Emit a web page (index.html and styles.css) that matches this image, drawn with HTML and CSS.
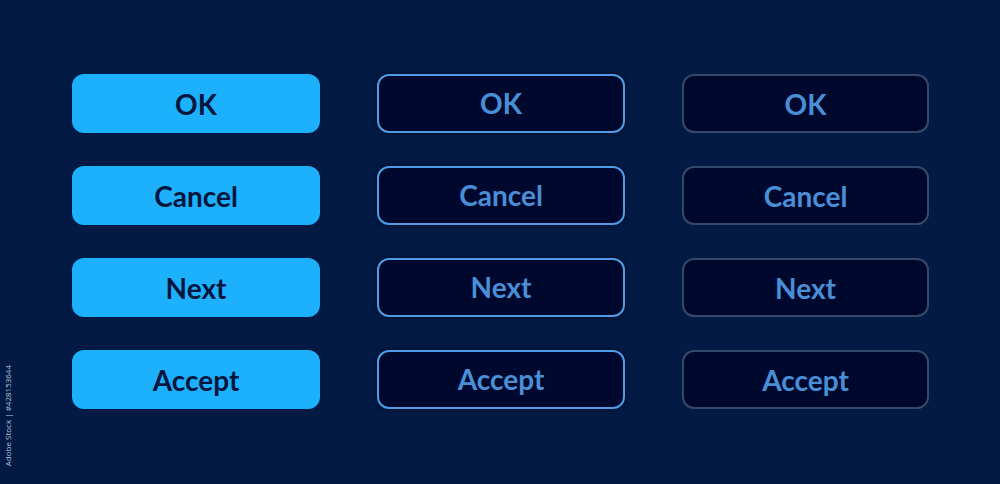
FILE: index.html
```html
<!DOCTYPE html>
<html lang="en">

<head>
  <meta charset="UTF-8">
  <meta name="viewport" content="width=device-width, initial-scale=1.0">
  <title>Buttons</title>
  <link rel="stylesheet" href="styles.css">
</head>

<body>
  <div class="board">
    <div class="column">
      <button class="btn btnFilled">OK</button>
      <button class="btn btnFilled">Cancel</button>
      <button class="btn btnFilled">Next</button>
      <button class="btn btnFilled">Accept</button>
    </div>
    <div class="column">
      <button class="btn btnOutline">OK</button>
      <button class="btn btnOutline">Cancel</button>
      <button class="btn btnOutline">Next</button>
      <button class="btn btnOutline">Accept</button>
    </div>
    <div class="column">
      <button class="btn btnMuted">OK</button>
      <button class="btn btnMuted">Cancel</button>
      <button class="btn btnMuted">Next</button>
      <button class="btn btnMuted">Accept</button>
    </div>
  </div>
  <div class="stockId">Adobe Stock | #428153644</div>
</body>

</html>
```

FILE: styles.css
```css
html,
body {
  margin: 0;
  width: 100%;
  height: 100%;
  background-color: #031a45;
  font-family: Lato, "Open Sans", sans-serif;
}

body {
  position: relative;
  overflow: hidden;
}

.board {
  display: grid;
  grid-template-columns: 248px 248px 247px;
  column-gap: 57px;
  padding: 74px 0 0 72px;
}

.column {
  display: flex;
  flex-direction: column;
  gap: 33px;
}

.btn {
  height: 59px;
  border-radius: 12px;
  font-family: inherit;
  font-size: 28px;
  font-weight: 700;
  cursor: pointer;
  padding: 0;
}

.btnFilled {
  background-color: #1db1fd;
  border: none;
  color: #04163e;
}

.btnOutline {
  background-color: #00082e;
  border: 2px solid #4f9be6;
  color: #4a8fd6;
  box-shadow: 0 0 4px rgba(0, 0, 0, 0.6);
  padding-bottom: 2px;
}

.btnMuted {
  background-color: #00082e;
  border: 2px solid #34496a;
  color: #4a8fd6;
}

.stockId {
  position: absolute;
  left: 2px;
  bottom: 18px;
  writing-mode: vertical-rl;
  transform: rotate(180deg);
  font-family: "Open Sans", sans-serif;
  font-size: 8px;
  color: #b8c2d4;
}
```
